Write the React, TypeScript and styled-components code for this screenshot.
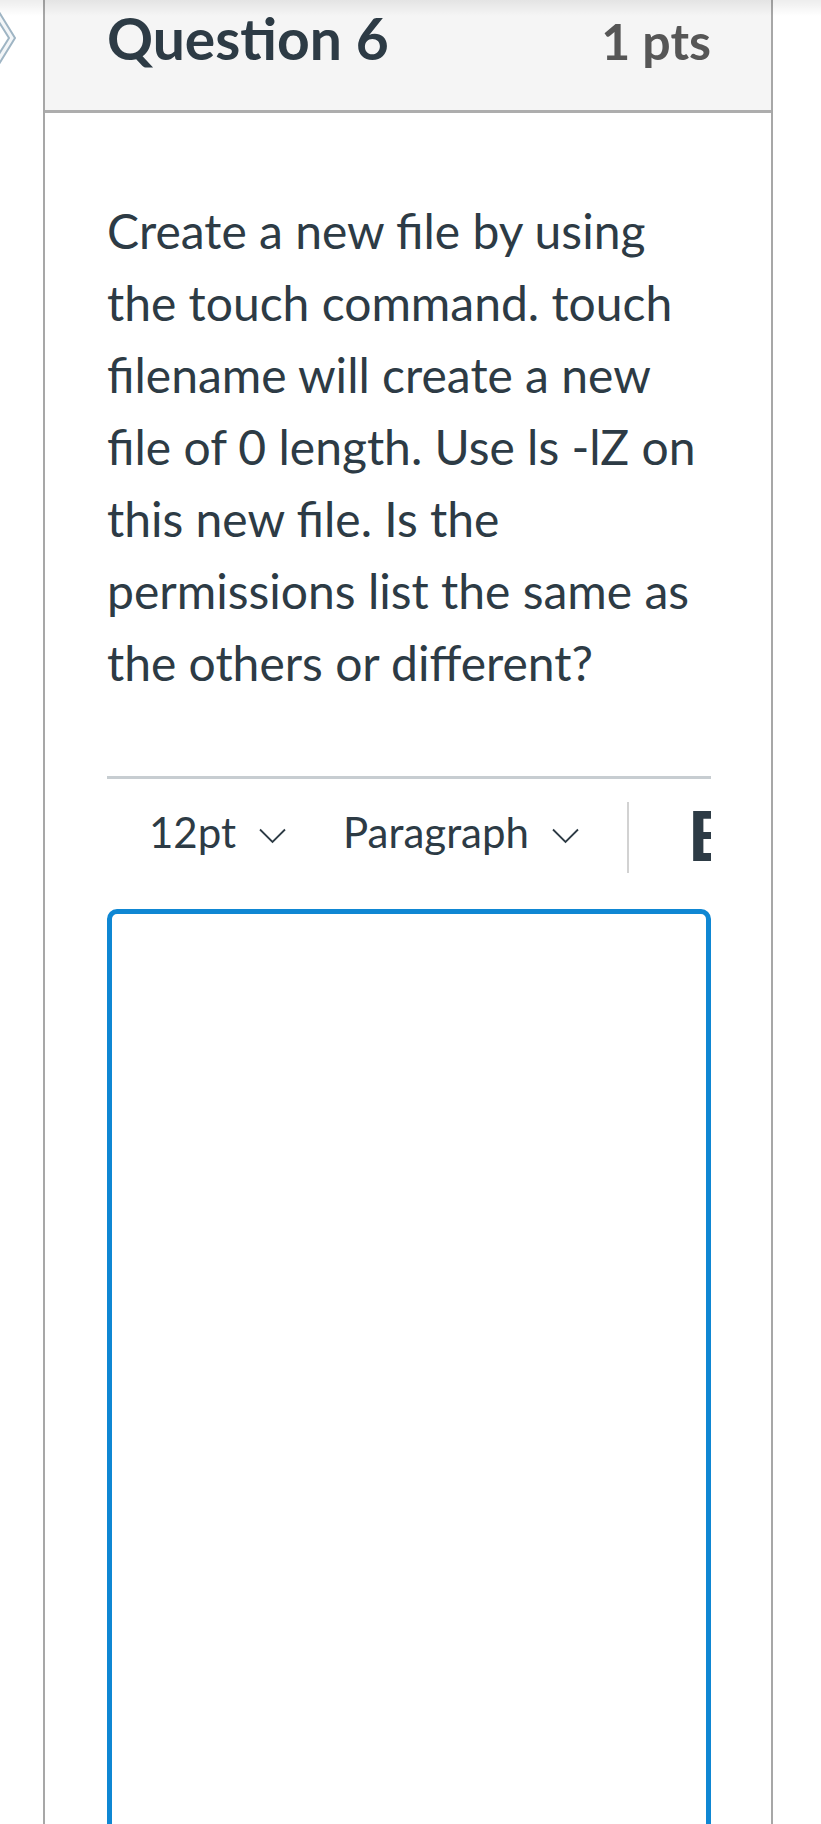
import React from "react";
import styled, { createGlobalStyle } from "styled-components";

const GlobalStyle = createGlobalStyle`
  html, body {
    margin: 0;
    padding: 0;
    background: #ffffff;
  }
  body {
    font-family: Lato, "Open Sans", "Liberation Sans", sans-serif;
    color: #2d3b45;
  }
  * { box-sizing: border-box; }
`;

const Page = styled.div`
  position: relative;
  height: 1824px;
  overflow: hidden;
  display: grid;
  grid-template-columns: 43px 730px 1fr;
  align-items: start;
`;

const TopShade = styled.div`
  position: absolute;
  top: 0;
  left: 0;
  right: 0;
  height: 16px;
  background: linear-gradient(to bottom, rgba(0, 0, 0, 0.07), rgba(0, 0, 0, 0));
  pointer-events: none;
`;

const NavColumn = styled.div`
  height: 100%;
  overflow: hidden;
  display: flex;
  align-items: flex-start;
`;

const Card = styled.section`
  height: 1824px;
  border-left: 2px solid #a7a7a7;
  border-right: 2px solid #a7a7a7;
  overflow: hidden;
  display: flex;
  flex-direction: column;
`;

const Header = styled.header`
  height: 113px;
  flex: none;
  background: #f5f5f5;
  border-bottom: 3px solid #adadad;
  padding: 6px 60px 0 62px;
  display: flex;
  justify-content: space-between;
  align-items: baseline;
`;

const Title = styled.h2`
  margin: 0;
  font-size: 57px;
  line-height: 64px;
  font-weight: 700;
  color: #2d3b45;
`;

const Points = styled.div`
  font-size: 50px;
  line-height: 64px;
  font-weight: 700;
  color: #565656;
`;

const Body = styled.div`
  flex: 1;
  padding: 82px 60px 0 62px;
  display: flex;
  flex-direction: column;
`;

const QuestionText = styled.p`
  margin: 0;
  font-size: 48px;
  line-height: 72px;
  color: #2d3b45;
`;

const Toolbar = styled.div`
  margin-top: 77px;
  border-top: 3px solid #c7cdd1;
  height: 120px;
  flex: none;
  padding: 23px 0 0 42px;
  display: flex;
  align-items: flex-start;
  overflow: hidden;
`;

const ToolButton = styled.div<{ $gap: number }>`
  height: 72px;
  flex: none;
  display: flex;
  align-items: center;
  gap: 23px;
  margin-right: ${(p) => p.$gap}px;
  padding-bottom: 12px;
  font-size: 42px;
  line-height: 1;
  color: #2d3b45;
  white-space: nowrap;
`;

const Chevron = styled.svg`
  width: 27px;
  height: 16px;
  margin-top: 8px;
  flex: none;
`;

const Separator = styled.div`
  width: 2px;
  height: 71px;
  flex: none;
  background: #d2d2d2;
  margin-right: 59px;
`;

const BoldIcon = styled.div`
  height: 72px;
  flex: none;
  display: flex;
  align-items: center;
  font-size: 68px;
  font-weight: 900;
  line-height: 1;
  color: #2d3b45;
  padding-bottom: 6px;
`;

const Editor = styled.div`
  margin-top: 13px;
  height: 1100px;
  flex: none;
  border: 5px solid #0f87d3;
  border-radius: 10px;
  background: #fff;
`;

const Down = () => (
  <Chevron viewBox="0 0 27 16" fill="none">
    <path d="M1 1.5 L13.5 14 L26 1.5" stroke="#2d3b45" strokeWidth="1.8" />
  </Chevron>
);

const NavArrow = () => (
  <svg width="43" height="80" viewBox="0 0 43 80">
    <path
      d="M-6 4 L15 38 L-6 72 L-6 62 L9 38 L-6 14 Z"
      fill="#f3f6f8"
      stroke="#9fb5c4"
      strokeWidth="2"
      strokeLinejoin="miter"
    />
  </svg>
);

export default function App() {
  return (
    <>
      <GlobalStyle />
      <Page>
        <NavColumn>
          <NavArrow />
        </NavColumn>
        <Card>
          <Header>
            <Title>Question 6</Title>
            <Points>1 pts</Points>
          </Header>
          <Body>
            <QuestionText>
              Create a new file by using the touch command. touch filename will
              create a new file of 0 length. Use ls -lZ on this new file. Is the
              permissions list the same as the others or different?
            </QuestionText>
            <Toolbar>
              <ToolButton $gap={57}>
                <span>12pt</span>
                <Down />
              </ToolButton>
              <ToolButton $gap={48}>
                <span>Paragraph</span>
                <Down />
              </ToolButton>
              <Separator />
              <BoldIcon>B</BoldIcon>
            </Toolbar>
            <Editor />
          </Body>
        </Card>
        <div />
        <TopShade />
      </Page>
    </>
  );
}
